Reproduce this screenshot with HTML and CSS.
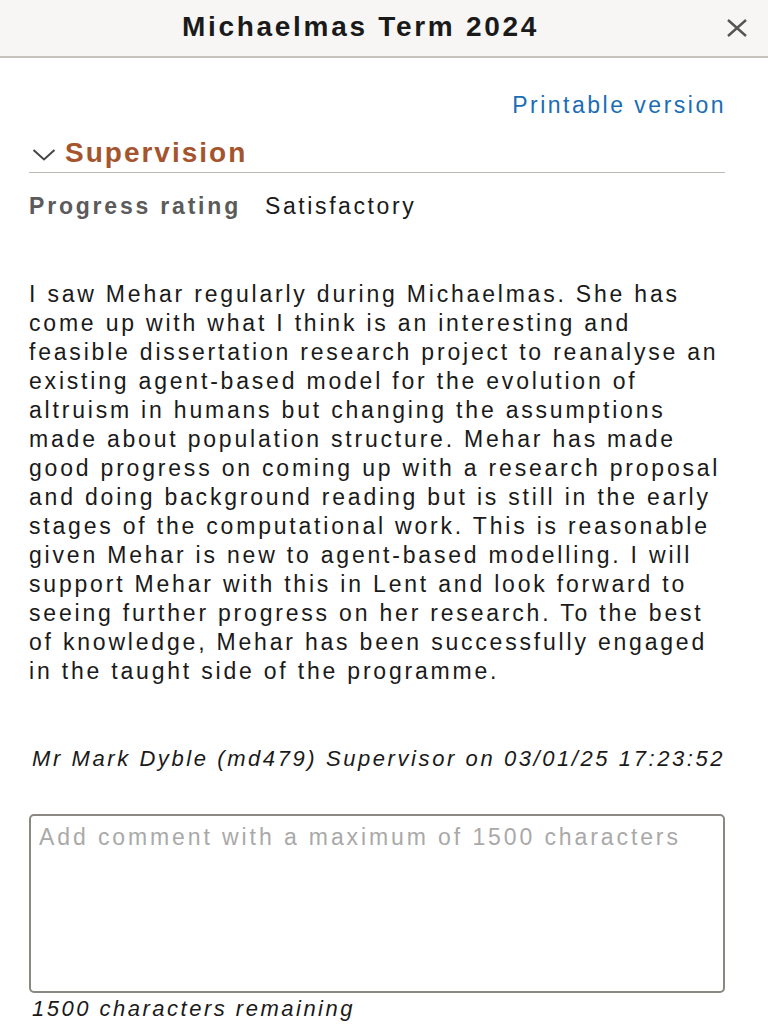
FILE: index.html
```html
<!DOCTYPE html>
<html lang="en">
  <head>
    <meta charset="UTF-8" />
    <meta name="viewport" content="width=device-width, initial-scale=1.0" />
    <title>Michaelmas Term 2024</title>
    <link rel="stylesheet" href="styles.css">
  </head>

  <body>
    <div id="header">
      <h1 id="title">Michaelmas Term 2024</h1>
      <button class="btn-close" aria-label="Close">
        <svg width="22" height="18" viewBox="0 0 22 18">
          <path d="M2 1 L20 17 M20 1 L2 17" stroke="#555" stroke-width="2.4" fill="none" />
        </svg>
      </button>
    </div>

    <div id="content">
      <div class="print-row">
        <a href="#" class="print-link">Printable version</a>
      </div>

      <div class="section-head">
        <svg class="chevron" width="24" height="14" viewBox="0 0 24 14">
          <path d="M1.5 2 L12 11.5 L22.5 2" stroke="#454545" stroke-width="2" fill="none" />
        </svg>
        <span class="section-title">Supervision</span>
      </div>

      <div class="rating-row">
        <span class="rating-label">Progress rating</span>
        <span class="rating-value">Satisfactory</span>
      </div>

      <p class="report-text">
        I saw Mehar regularly during Michaelmas. She has come up with what I think is an interesting and feasible dissertation research project to reanalyse an existing agent-based model for the evolution of altruism in humans but changing the assumptions made about population structure. Mehar has made good progress on coming up with a research proposal and doing background reading but is still in the early stages of the computational work. This is reasonable given Mehar is new to agent-based modelling. I will support Mehar with this in Lent and look forward to seeing further progress on her research. To the best of knowledge, Mehar has been successfully engaged in the taught side of the programme.
      </p>

      <p class="signature">Mr Mark Dyble (md479) Supervisor on 03/01/25 17:23:52</p>

      <textarea class="comment-box" placeholder="Add comment with a maximum of 1500 characters"></textarea>
      <p class="remaining">1500 characters remaining</p>
    </div>
  </body>
</html>
```

FILE: styles.css
```css
body {
  margin: 0;
  font-family: "Liberation Sans", Arial, sans-serif;
  color: #1a1a1a;
  background-color: #fff;
}

#header {
  position: relative;
  height: 58px;
  box-sizing: border-box;
  padding: 0 47px 2px 0;
  background-color: #f7f6f4;
  border-bottom: 2px solid #c6c3bd;
  display: flex;
  align-items: center;
  justify-content: center;
}

#title {
  margin: 0;
  font-size: 28px;
  font-weight: bold;
  letter-spacing: 2.7px;
  color: #1a1a1a;
}

.btn-close {
  position: absolute;
  right: 20px;
  top: 19px;
  border: 0;
  padding: 0;
  background: none;
  width: 22px;
  height: 18px;
}

#content {
  padding: 0 43px 0 29px;
}

.print-row {
  display: flex;
  justify-content: flex-end;
  padding-top: 33px;
}

.print-link {
  font-size: 23px;
  line-height: 29px;
  color: #1a6db4;
  text-decoration: none;
  letter-spacing: 2.5px;
  margin-right: -1px;
}

.section-head {
  display: flex;
  align-items: center;
  gap: 9px;
  margin-top: 16px;
  padding-bottom: 2px;
  border-bottom: 1px solid #bdb9b4;
}

.chevron {
  margin-left: 3px;
  margin-top: 4px;
}

.section-title {
  font-size: 28px;
  line-height: 34px;
  font-weight: bold;
  color: #a4552d;
  letter-spacing: 2px;
}

.rating-row {
  display: flex;
  gap: 24px;
  margin-top: 19px;
  font-size: 23px;
  line-height: 29px;
}

.rating-label {
  font-weight: bold;
  color: #5b5b5b;
  letter-spacing: 2.8px;
}

.rating-value {
  color: #1a1a1a;
  letter-spacing: 2.6px;
}

.report-text {
  margin: 59px 0 0;
  font-size: 23px;
  line-height: 29px;
  letter-spacing: 2.8px;
}

.signature {
  margin: 58px 0 0 3px;
  font-size: 22px;
  line-height: 29px;
  font-style: italic;
  letter-spacing: 2.58px;
  white-space: nowrap;
}

.comment-box {
  display: block;
  box-sizing: border-box;
  width: 100%;
  height: 179px;
  margin-top: 41px;
  padding: 7px 8px;
  border: 2px solid #8b8783;
  border-radius: 5px;
  font-family: "Liberation Sans", Arial, sans-serif;
  font-size: 23px;
  line-height: 29px;
  letter-spacing: 2.9px;
  resize: none;
}

.comment-box::placeholder {
  color: #a9a9a9;
}

.remaining {
  margin: 1px 0 0 3px;
  font-size: 22px;
  line-height: 29px;
  font-style: italic;
  letter-spacing: 2.5px;
}
```
